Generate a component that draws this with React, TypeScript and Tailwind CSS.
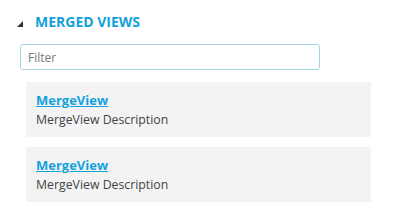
export default function App() {
  const views = [
    { name: 'MergeView', description: 'MergeView Description' },
    { name: 'MergeView', description: 'MergeView Description' },
  ]

  return (
    <div className="w-[400px] h-[208px] bg-white px-5 pt-[12px]" style={{ fontFamily: '"Segoe UI", "Open Sans", "Noto Sans", sans-serif' }}>
      <div className="flex items-center h-5">
        <svg width="6" height="6" viewBox="0 0 6 6" className="ml-[-3px] mt-[4px] mr-[12px]">
          <polygon points="6,0 6,6 0,6" fill="#333" />
        </svg>
        <h2 className="text-[14px] font-bold uppercase text-[#13a1dc] leading-5">Merged Views</h2>
      </div>
      <input
        type="text"
        placeholder="Filter"
        className="mt-[12px] block w-[300px] h-[26px] rounded-[3px] border border-[#a7d5e8] px-[7px] text-[12px] text-[#333] placeholder:text-[#777] outline-none"
      />
      <div className="mt-3 ml-[6px] flex flex-col gap-[10px]">
        {views.map((v, i) => (
          <div key={i} className="w-[345px] h-[55px] bg-[#f3f3f3] px-[10px] pt-[9px]">
            <a href="#" className="block text-[13px] font-bold text-[#13a1dc] underline leading-[18px]">
              {v.name}
            </a>
            <div className="text-[12.3px] text-[#444] leading-[18px] mt-[2px]">{v.description}</div>
          </div>
        ))}
      </div>
    </div>
  )
}
